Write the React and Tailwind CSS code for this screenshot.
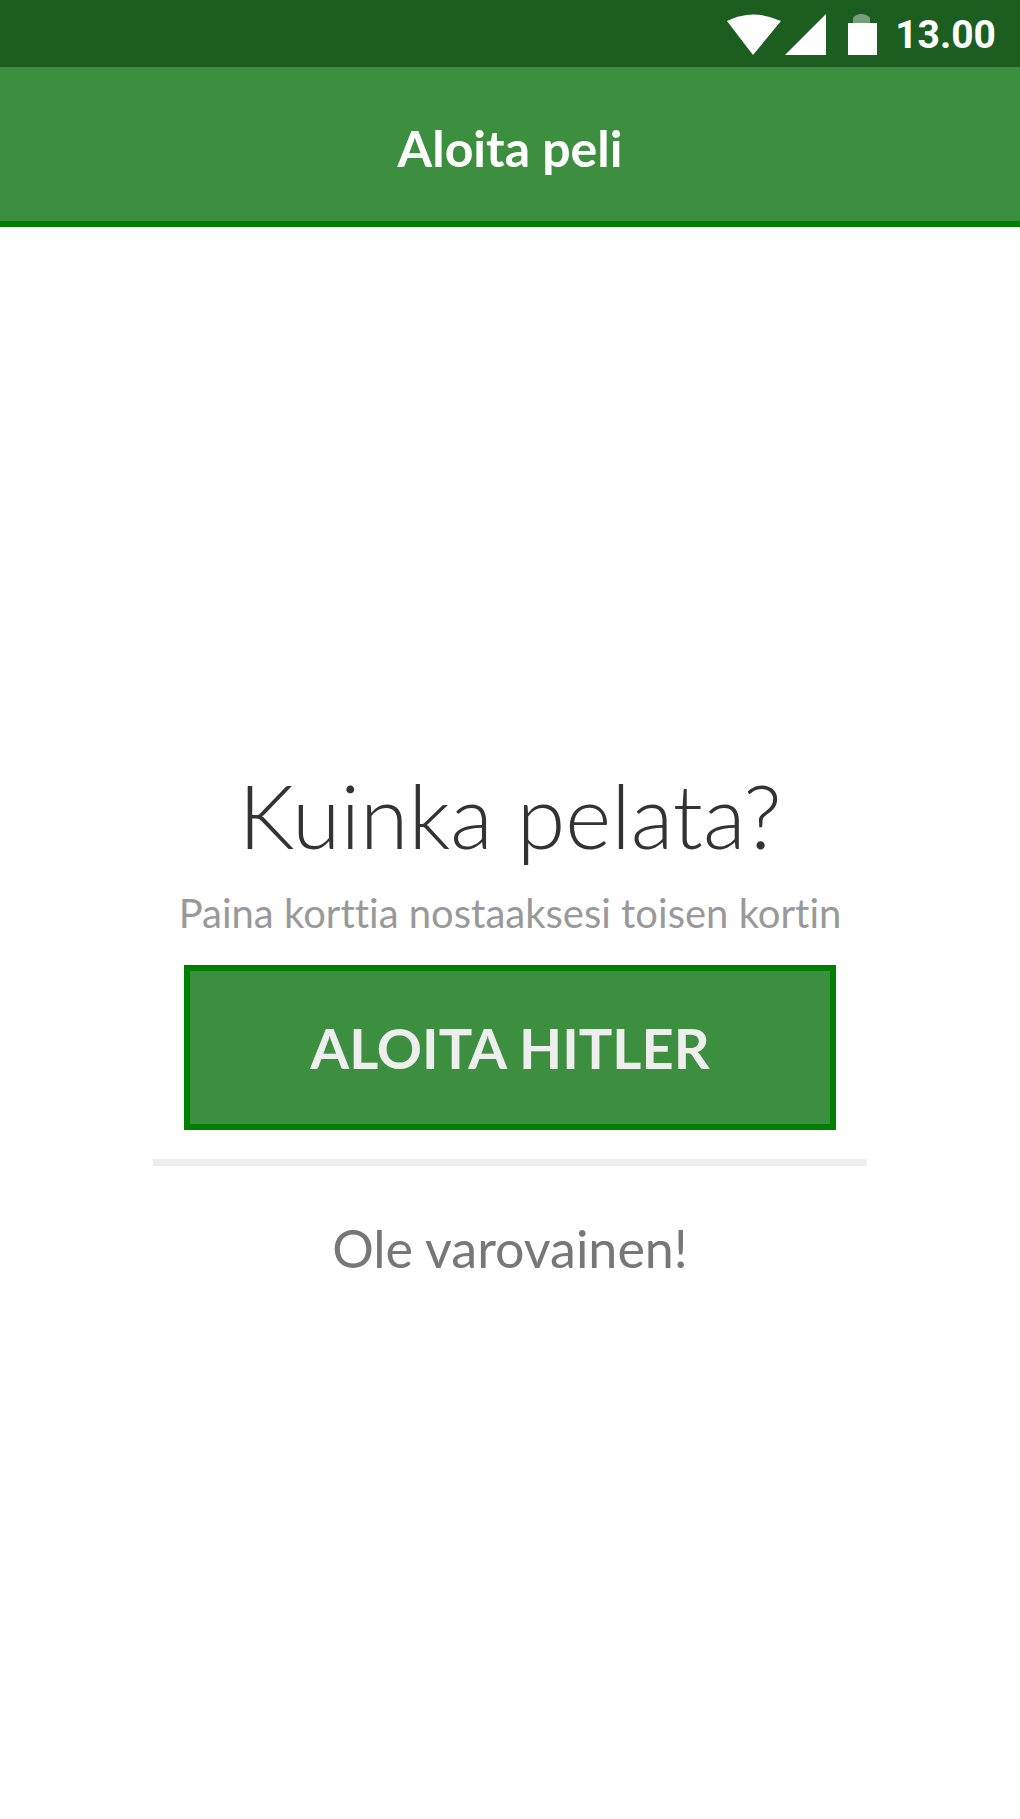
export default function App() {
  return (
    <div className="flex min-h-screen flex-col bg-white font-['Lato',sans-serif] [font-variant-ligatures:none]">
      <div className="flex h-[67px] items-center justify-end bg-[#1b5e20] pr-6 text-white">
        <svg className="h-[44px] w-[152px]" viewBox="0 0 152 44" fill="currentColor" aria-hidden="true">
          <path d="M0 9 Q26 -4 54 9 L26 43 Z" />
          <path d="M99 2 V43 H58 Z" />
          <path d="M126 11 V6 Q129 2 134 2 Q140 2 143 6 V11 Z" opacity="0.4" />
          <path d="M121 11 H150 V43 H121 Z" />
        </svg>
        <span className="ml-4 pt-1 font-['Roboto',sans-serif] text-[39px] leading-none font-bold">13.00</span>
      </div>
      <header className="flex h-[160px] items-center justify-center border-b-[6px] border-[#008000] bg-[#3b8f3e] pt-2 text-white">
        <h1 className="text-[50px] leading-none font-bold">Aloita peli</h1>
      </header>
      <main className="flex flex-1 flex-col items-center pt-[536px]">
        <h2 className="text-[88px] leading-[104px] font-light text-[#333333]">Kuinka pelata?</h2>
        <p className="mt-[22px] text-[40px] leading-[48px] text-[#999999]">Paina korttia nostaaksesi toisen kortin</p>
        <button type="button" className="mt-7 h-[165px] w-[64%] border-[6px] border-[#008000] bg-[#3b8f3e] text-[56px] leading-none font-bold text-[#eeeeee]">ALOITA HITLER</button>
        <hr className="mt-[29px] w-[70%] border-t-[7px] border-[#eeeeee]" />
        <p className="mt-[52px] text-[52px] leading-[60px] text-[#777777]">Ole varovainen!</p>
      </main>
    </div>
  );
}
